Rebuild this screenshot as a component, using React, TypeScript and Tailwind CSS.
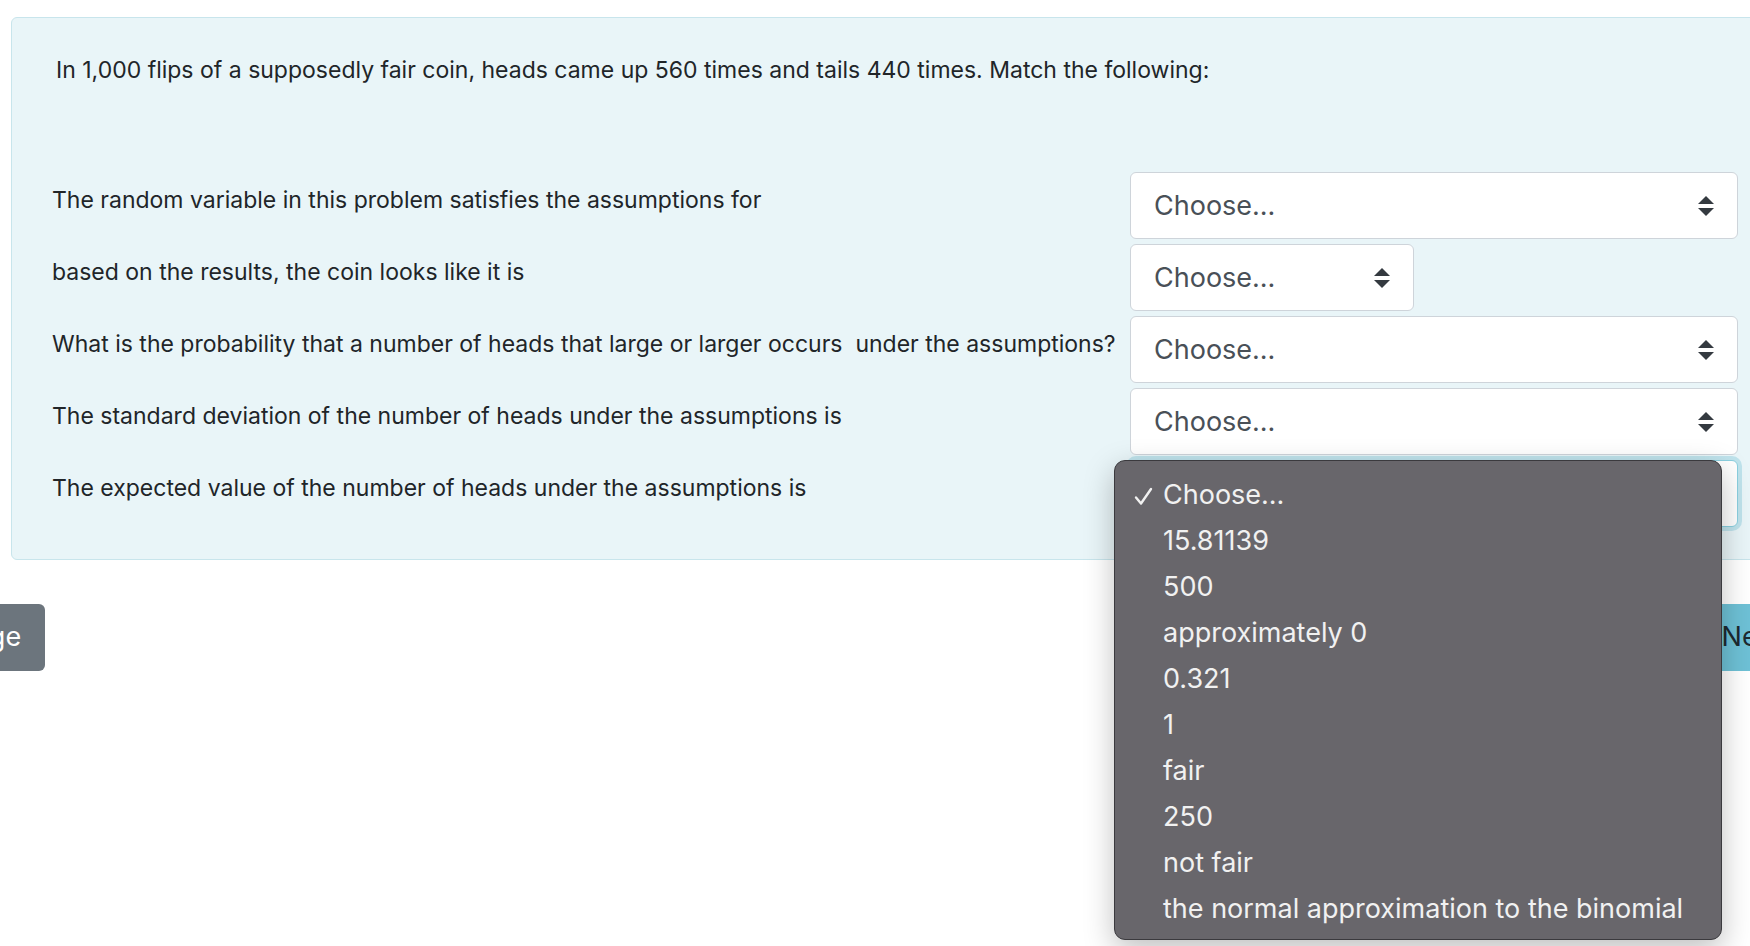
import React from 'react';

const ROWS: { label: string; wide: boolean }[] = [
  { label: 'The random variable in this problem satisfies the assumptions for', wide: true },
  { label: 'based on the results, the coin looks like it is', wide: false },
  {
    label: 'What is the probability that a number of heads that large or larger occurs \u00a0under the assumptions?',
    wide: true,
  },
  { label: 'The standard deviation of the number of heads under the assumptions is', wide: true },
  { label: 'The expected value of the number of heads under the assumptions is', wide: true },
];

const OPTIONS = [
  'Choose...',
  '15.81139',
  '500',
  'approximately 0',
  '0.321',
  '1',
  'fair',
  '250',
  'not fair',
  'the normal approximation to the binomial',
];

function Arrows() {
  return (
    <svg width="16" height="20" viewBox="0 0 4 5" className="shrink-0">
      <path d="M2 0L0 2h4zm0 5L0 3h4z" fill="#343a40" />
    </svg>
  );
}

function Check() {
  return (
    <svg width="19" height="19" viewBox="0 0 19 19" className="mt-[2px]">
      <path d="M2 10.5 L7 16.5 L17 2" fill="none" stroke="#f1f1f1" strokeWidth="2.4" strokeLinecap="round" strokeLinejoin="round" />
    </svg>
  );
}

function FakeSelect({ wide, focused }: { wide: boolean; focused?: boolean }) {
  return (
    <div
      className={`flex h-[67px] shrink-0 items-center justify-between rounded-[6px] border bg-white pl-[23px] pr-[23px] text-[27px] text-[#495057] ${
        wide ? 'w-[608px]' : 'w-[284px]'
      } ${focused ? 'border-[#8bd0e0] ring-4 ring-[#bfe3ec]' : 'border-[#ced4da]'}`}
    >
      <span className="pt-[2px]">Choose...</span>
      <Arrows />
    </div>
  );
}

export default function App() {
  return (
    <div
      className="relative h-[946px] w-[1750px] overflow-hidden bg-white text-[#212529]"
      style={{ fontFamily: 'Inter, "Liberation Sans", sans-serif' }}
    >
      {/* question card */}
      <div className="ml-[11px] mt-[17px] w-[1780px] rounded-[6px] border border-[#c8e5ec] bg-[#e9f5f8] pb-[32px] pl-[40px] pt-[38px]">
        <p className="mb-[88px] pl-[4px] text-[23px] leading-[28px]">
          In 1,000 flips of a supposedly fair coin, heads came up 560 times and tails 440 times. Match the following:
        </p>
        <div className="flex flex-col gap-[5px]">
          {ROWS.map((row, i) => (
            <div key={i} className="flex items-start">
              <div className="w-[1078px] whitespace-nowrap pt-[14px] text-[23px] leading-[28px]">{row.label}</div>
              <FakeSelect wide={row.wide} focused={i === 4} />
            </div>
          ))}
        </div>
      </div>

      {/* nav buttons, both partly scrolled out of view */}
      <div className="mt-[44px] flex justify-between">
        <button className="-ml-[185px] h-[67px] whitespace-nowrap rounded-[6px] bg-[#6c757d] px-[24px] text-[27px] text-white">
          Previous page
        </button>
        <button className="-mr-[127px] h-[67px] whitespace-nowrap rounded-[6px] bg-[#6ec1d6] px-[24px] text-[27px] text-[#1c2a30]">
          Next page
        </button>
      </div>

      {/* open native-style option list */}
      <div className="absolute left-[1114px] top-[460px] w-[608px] rounded-[11px] border border-[#3b3a3e] bg-[#68666b] pb-[7px] pt-[11px] text-[27px] leading-[46px] text-[#f1f1f1] shadow-[0_10px_30px_rgba(0,0,0,0.25)]">
        {OPTIONS.map((opt, i) => (
          <div key={opt} className="flex items-center">
            <span className="flex w-[48px] pl-[19px]">{i === 0 ? <Check /> : null}</span>
            <span>{opt}</span>
          </div>
        ))}
      </div>
    </div>
  );
}
